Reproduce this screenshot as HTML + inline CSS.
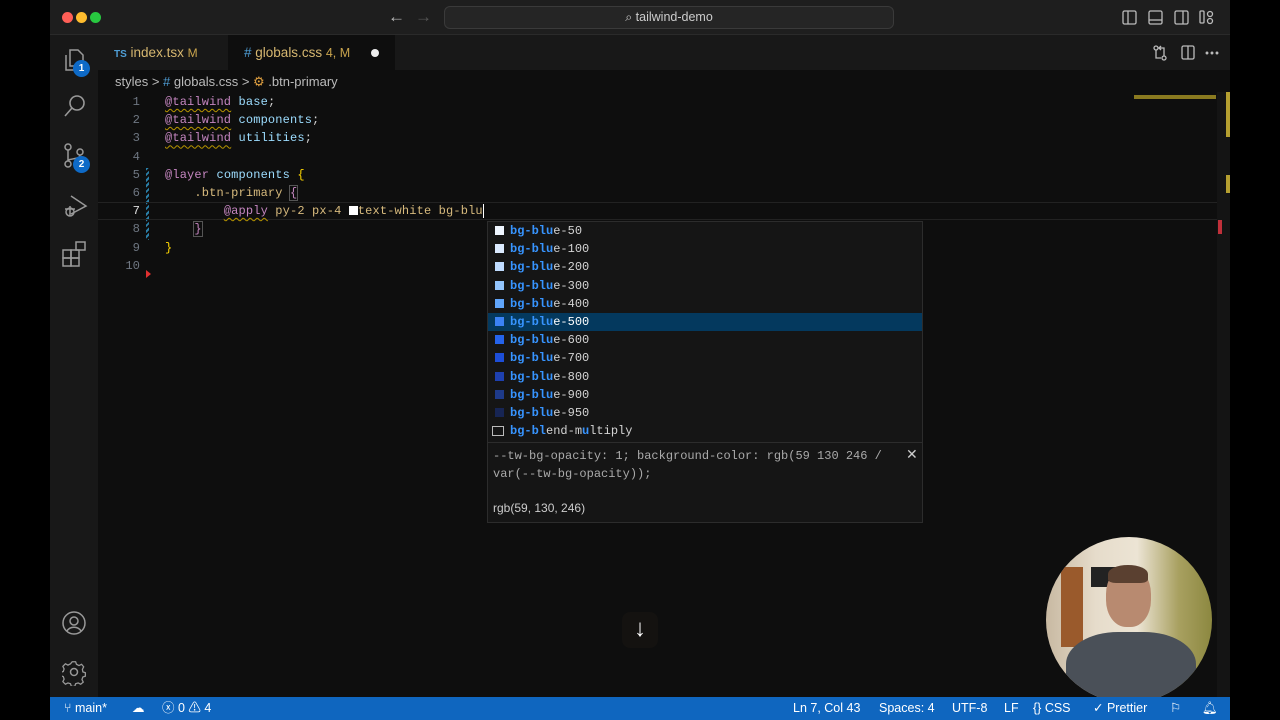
<!DOCTYPE html>
<html><head><meta charset="utf-8"><style>
*{box-sizing:border-box;margin:0;padding:0}
body{width:1280px;height:720px;background:#000;position:relative;overflow:hidden;font-family:"Liberation Sans",sans-serif;color:#ccc}
.abs{position:absolute}
.win{left:50px;top:0;width:1180px;height:720px;background:#0e0e0e;position:absolute;overflow:hidden}
.title{left:0;top:0;width:1180px;height:35px;background:#1e1e1e;border-bottom:1px solid #2a2a2a}
.dot{width:11px;height:11px;border-radius:50%;top:12px}
.search{left:394px;top:6px;width:450px;height:23px;border:1px solid #3a3a3a;border-radius:6px;background:#252525;font-size:12.5px;color:#ccc;text-align:center;line-height:21px}
.act{left:0;top:35px;width:48px;height:662px;background:#181818}
.tabs{left:48px;top:35px;width:1132px;height:35px;background:#181818}
.tab{top:0;height:35px;font-size:13.5px;line-height:35px}
.code{font-family:"Liberation Mono",monospace;font-size:12px;letter-spacing:0.15px;white-space:pre}
.ln{left:60px;width:30px;text-align:right;color:#6e7681;font-family:"Liberation Mono",monospace;font-size:12.2px}
.k{color:#c586c0}.b{color:#9cdcfe}.y{color:#ffd700}.w{color:#d4d4d4}.s{color:#d7ba7d}
.sq{text-decoration:underline wavy #b89500;text-decoration-thickness:1px;text-underline-offset:3px}
.sug{left:437px;top:221px;width:436px;height:302px;background:#151515;border:1px solid #2c2c2c}
.row{position:absolute;left:0;width:434px;height:18.2px;line-height:18px}
.row .sw{position:absolute;left:7px;top:4px;width:9px;height:9px}
.row .t{position:absolute;left:22px;color:#d4d4d4}
.row .t b{color:#3794ff;font-weight:bold}
.status{left:0;top:697px;width:1180px;height:23px;background:#0f66bf;color:#fff;font-size:12.5px;line-height:23px}
</style></head><body>
<div class="win">
 <div class="abs title">
  <div class="abs dot" style="left:12px;background:#ff5f57"></div>
  <div class="abs dot" style="left:26px;background:#febc2e"></div>
  <div class="abs dot" style="left:40px;background:#28c840"></div>
  <div class="abs" style="left:338px;top:7px;font-size:17px;color:#bbb">←</div>
  <div class="abs" style="left:365px;top:7px;font-size:17px;color:#555">→</div>
  <div class="abs search">⌕ tailwind-demo</div>
  <svg class="abs" style="left:1070px;top:10px" width="110" height="16" fill="none" stroke="#bbb" stroke-width="1.3">
   <rect x="3" y="1" width="13" height="13" rx="1.5"/><line x1="8" y1="1" x2="8" y2="14"/>
   <rect x="29" y="1" width="13" height="13" rx="1.5"/><line x1="29" y1="10" x2="42" y2="10"/>
   <rect x="55" y="1" width="13" height="13" rx="1.5"/><line x1="63" y1="1" x2="63" y2="14"/>
   <rect x="80" y="1" width="4" height="12" rx="1"/><circle cx="90" cy="4" r="2.5"/><circle cx="90" cy="11" r="2.5"/>
  </svg>
 </div>
 <div class="abs act">
  <svg class="abs" style="left:12px;top:12px" width="26" height="26" fill="none" stroke="#999" stroke-width="1.5"><path d="M8 3h8l5 5v11H8z M4 8v15h12"/></svg>
  <div class="abs" style="left:23px;top:25px;width:17px;height:17px;border-radius:50%;background:#0e6ac7;color:#fff;font-size:10px;font-weight:bold;text-align:center;line-height:17px">1</div>
  <svg class="abs" style="left:12px;top:58px" width="26" height="26" fill="none" stroke="#999" stroke-width="1.6"><circle cx="15" cy="10" r="7"/><line x1="10" y1="15" x2="3" y2="23"/></svg>
  <svg class="abs" style="left:12px;top:108px" width="26" height="26" fill="none" stroke="#999" stroke-width="1.5"><circle cx="6" cy="4" r="3"/><circle cx="6" cy="21" r="3"/><circle cx="18" cy="9" r="3"/><path d="M6 7v11M18 12c0 5-12 3-12 6"/></svg>
  <div class="abs" style="left:23px;top:121px;width:17px;height:17px;border-radius:50%;background:#0e6ac7;color:#fff;font-size:10px;font-weight:bold;text-align:center;line-height:17px">2</div>
  <svg class="abs" style="left:12px;top:158px" width="26" height="26" fill="none" stroke="#999" stroke-width="1.5"><path d="M9 3l15 10-15 8M3 16h10M8 13v10"/><circle cx="8" cy="19" r="4"/></svg>
  <svg class="abs" style="left:12px;top:206px" width="26" height="26" fill="none" stroke="#999" stroke-width="1.5"><rect x="1" y="9" width="8" height="8"/><rect x="9" y="9" width="8" height="8"/><rect x="1" y="17" width="8" height="8"/><rect x="9" y="17" width="8" height="8"/><rect x="14" y="1" width="9" height="8"/></svg>
  <svg class="abs" style="left:12px;top:576px" width="26" height="26" fill="none" stroke="#999" stroke-width="1.5"><circle cx="12" cy="12" r="11"/><circle cx="12" cy="10" r="4"/><path d="M5 20c3-5 11-5 14 0"/></svg>
  <svg class="abs" style="left:12px;top:625px" width="26" height="26" fill="none" stroke="#999" stroke-width="1.5"><circle cx="12" cy="12" r="3.5"/><path d="M10 1h4l1 3 3 1.5 3-1.5 2.5 3-1.5 3 .5 3 3 1v4l-3 1-1 3 1.5 3-3 2.5-3-1.5-3 1-1 3h-4l-1-3-3-1-3 1.5-3-3 1.5-3-1-3-3-1v-4l3-1 1-3-1.5-3 3-3 3 1.5 3-1.5z" transform="scale(.85) translate(2 1)"/></svg>
 </div>
 <div class="abs tabs">
  <div class="abs tab" style="left:0;width:130px;color:#ccc;padding-left:16px"><span style="color:#4f9ed6;font-size:10px;font-weight:bold">TS</span> <span style="color:#d6b770">index.tsx</span> <span style="color:#c9a44d;font-size:12px">M</span></div>
  <div class="abs tab" style="left:130px;width:167px;background:#0e0e0e;padding-left:16px"><span style="color:#4f9ed6">#</span> <span style="color:#d6b770">globals.css</span> <span style="color:#c9a44d;font-size:12.5px">4, M</span><span style="position:absolute;left:143px;top:14px;width:8px;height:8px;border-radius:50%;background:#eee"></span></div>
  <svg class="abs" style="left:1055px;top:10px" width="70" height="16" fill="none" stroke="#bbb" stroke-width="1.3"><circle cx="3" cy="3" r="2"/><circle cx="11" cy="13" r="2"/><path d="M3 5v8h5M11 11V3H6l2-2M6 3l2 2"/><rect x="29" y="1" width="12" height="13" rx="1.5"/><line x1="35" y1="1" x2="35" y2="14"/><circle cx="54" cy="8" r=".8" fill="#bbb"/><circle cx="59" cy="8" r=".8" fill="#bbb"/><circle cx="64" cy="8" r=".8" fill="#bbb"/></svg>
 </div>
 <div class="abs" style="left:65px;top:74px;font-size:13px;color:#bbb">styles &gt; <span style="color:#4f9ed6">#</span> globals.css &gt; <span style="color:#e0a040">⚙</span> .btn-primary</div>
 <div class="abs ln code" style="top:93px;line-height:18.2px;letter-spacing:0">1
2
3
4
5
6
<span style="color:#ddd">7</span>
8
9
10</div>
 <div class="abs" style="left:96px;top:168px;width:3px;height:72px;background:repeating-linear-gradient(135deg,#2a7fa8 0 2px,transparent 2px 4px)"></div>
 <div class="abs" style="left:96px;top:270px;width:0;height:0;border-left:5px solid #e03030;border-top:4px solid transparent;border-bottom:4px solid transparent"></div>
 <div class="abs" style="left:48px;top:202px;width:1132px;height:18px;border-top:1px solid #222;border-bottom:1px solid #222"></div>
 <div class="abs code" style="left:115px;top:93px;line-height:18.2px"><span class="k sq">@tailwind</span> <span class="b">base</span><span class="w">;</span>
<span class="k sq">@tailwind</span> <span class="b">components</span><span class="w">;</span>
<span class="k sq">@tailwind</span> <span class="b">utilities</span><span class="w">;</span>

<span class="k">@layer</span> <span class="b">components</span> <span class="y">{</span>
    <span class="s">.btn-primary</span> <span class="k" style="outline:1px solid #555">{</span>
        <span class="k sq">@apply</span> <span class="s">py-2 px-4 </span><span style="display:inline-block;width:9px;height:9px;background:#fff;vertical-align:-1px"></span><span class="s">text-white bg-blu</span><span style="border-left:1.5px solid #fff"></span>
    <span class="k" style="outline:1px solid #555">}</span>
<span class="y">}</span>
</div>
 <div class="abs" style="left:1084px;top:95px;width:82px;height:4px;background:#8a7a20"></div>
 <div class="abs" style="left:1167px;top:92px;width:13px;height:605px;background:#141414"></div>
 <div class="abs" style="left:1176px;top:92px;width:4px;height:45px;background:#b59f30"></div>
 <div class="abs" style="left:1176px;top:175px;width:4px;height:18px;background:#b59f30"></div>
 <div class="abs" style="left:1168px;top:220px;width:4px;height:14px;background:#c0303a"></div>
 <div class="abs sug code" style="letter-spacing:0">
  <div class="row" style="top:0"><span class="sw" style="background:#eff6ff"></span><span class="t"><b>bg-blu</b>e-50</span></div>
  <div class="row" style="top:18.2px"><span class="sw" style="background:#dbeafe"></span><span class="t"><b>bg-blu</b>e-100</span></div>
  <div class="row" style="top:36.4px"><span class="sw" style="background:#bfdbfe"></span><span class="t"><b>bg-blu</b>e-200</span></div>
  <div class="row" style="top:54.6px"><span class="sw" style="background:#93c5fd"></span><span class="t"><b>bg-blu</b>e-300</span></div>
  <div class="row" style="top:72.8px"><span class="sw" style="background:#60a5fa"></span><span class="t"><b>bg-blu</b>e-400</span></div>
  <div class="row" style="top:91px;background:#04395e"><span class="sw" style="background:#3b82f6"></span><span class="t" style="color:#fff"><b>bg-blu</b>e-500</span></div>
  <div class="row" style="top:109.2px"><span class="sw" style="background:#2563eb"></span><span class="t"><b>bg-blu</b>e-600</span></div>
  <div class="row" style="top:127.4px"><span class="sw" style="background:#1d4ed8"></span><span class="t"><b>bg-blu</b>e-700</span></div>
  <div class="row" style="top:145.6px"><span class="sw" style="background:#1e40af"></span><span class="t"><b>bg-blu</b>e-800</span></div>
  <div class="row" style="top:163.8px"><span class="sw" style="background:#1e3a8a"></span><span class="t"><b>bg-blu</b>e-900</span></div>
  <div class="row" style="top:182px"><span class="sw" style="background:#172554"></span><span class="t"><b>bg-blu</b>e-950</span></div>
  <div class="row" style="top:200.2px"><span class="sw" style="left:4px;top:4px;width:12px;height:10px;border:1px solid #bbb"></span><span class="t"><b>bg-bl</b>end-m<b>u</b>ltiply</span></div>
  <div class="abs" style="left:0;top:220px;width:434px;border-top:1px solid #2c2c2c"></div>
  <div class="abs" style="left:5px;top:225px;line-height:18px;color:#aaa">--tw-bg-opacity: 1; background-color: rgb(59 130 246 /
var(--tw-bg-opacity));</div>
  <div class="abs" style="left:418px;top:224px;color:#ccc;font-family:'Liberation Sans';font-size:14px">✕</div>
  <div class="abs" style="left:5px;top:279px;font-family:'Liberation Sans';font-size:12px;color:#ccc">rgb(59, 130, 246)</div>
 </div>
 <div class="abs" style="left:572px;top:612px;width:36px;height:36px;border-radius:8px;background:#141210;color:#fff;font-size:24px;text-align:center;line-height:34px;font-weight:bold">↓</div>
 <div class="abs" style="left:996px;top:537px;width:166px;height:166px;border-radius:50%;overflow:hidden;background:linear-gradient(90deg,#c8b9a2 0%,#e6dccb 30%,#ece4d4 55%,#a8a060 80%,#8c8840 100%)">
  <div class="abs" style="left:15px;top:30px;width:22px;height:80px;background:#9a5a2c"></div>
  <div class="abs" style="left:45px;top:30px;width:30px;height:20px;background:#222"></div>
  <div class="abs" style="left:60px;top:30px;width:45px;height:60px;border-radius:45%;background:#b88a70"></div>
  <div class="abs" style="left:62px;top:28px;width:40px;height:18px;border-radius:50% 50% 20% 20%;background:#5a4030"></div>
  <div class="abs" style="left:20px;top:95px;width:130px;height:80px;border-radius:40% 40% 0 0;background:#4a5058"></div>
 </div>
 <div class="abs status">
  <span class="abs" style="left:14px">⑂ main*</span>
  <span class="abs" style="left:82px">☁</span>
  <span class="abs" style="left:112px">ⓧ 0 ⚠ 4</span>
  <span class="abs" style="left:743px">Ln 7, Col 43</span>
  <span class="abs" style="left:829px">Spaces: 4</span>
  <span class="abs" style="left:902px">UTF-8</span>
  <span class="abs" style="left:954px">LF</span>
  <span class="abs" style="left:983px">{} CSS</span>
  <span class="abs" style="left:1043px">✓ Prettier</span>
  <span class="abs" style="left:1120px">⚐</span>
  <span class="abs" style="left:1152px">🔔︎</span>
 </div>
</div>
</body></html>
